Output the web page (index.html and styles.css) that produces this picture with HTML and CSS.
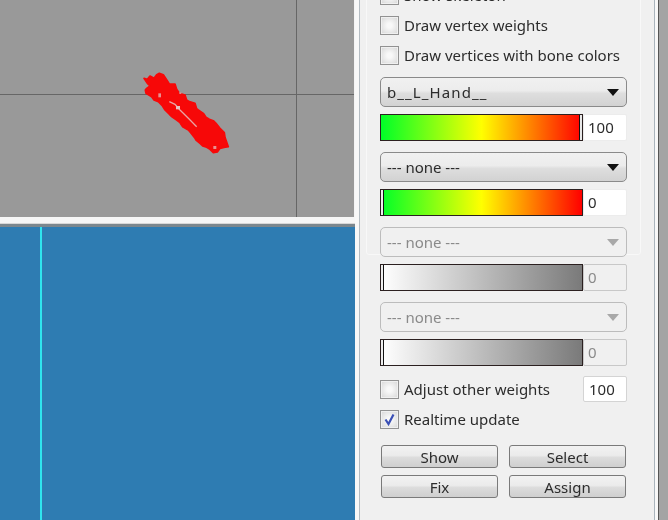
FILE: index.html
```html
<!DOCTYPE html>
<html lang="en">
<head>
<meta charset="utf-8">
<title>Vertex weights</title>
<link rel="stylesheet" href="styles.css">
</head>
<body>
<div class="app">
  <div class="views">
    <div class="view3d">
      <div class="gridline-h"></div>
      <div class="gridline-v"></div>
      <svg class="blob" width="110" height="100" viewBox="0 0 330 300">
        <path d="M42 55 L52 58 L60 48 L72 55 L80 44 L88 40 L100 44 L108 56 L118 72 L135 72 L140 88 L148 100 L165 105 L170 120 L178 125 L195 130 L200 146 L205 150 L220 160 L228 172 L238 178 L250 182 L258 190 L270 205 L283 218 L285 232 L295 260 L282 262 L270 265 L262 276 L250 278 L240 268 L230 262 L218 258 L210 250 L198 240 L195 235 L182 218 L175 210 L158 200 L150 188 L140 180 L128 172 L120 165 L105 150 L96 136 L85 125 L72 120 L65 110 L48 100 L46 90 L50 85 L60 78 L52 70 Z" fill="#f70808" stroke="#f70808" stroke-width="5" stroke-linejoin="round"/>
        <path d="M118 125 L135 133 L150 150 L175 175 L200 200" fill="none" stroke="#e8a4a4" stroke-width="4"/>
        <rect x="85" y="100" width="8" height="12" fill="#e89090"/>
        <rect x="138" y="138" width="12" height="10" fill="#e8c0c0"/>
        <rect x="250" y="258" width="9" height="9" fill="#e89090"/>
        <rect x="148" y="96" width="6" height="6" fill="#d09090"/>
      </svg>
    </div>
    <div class="sash"></div>
    <div class="view2d"><div class="cursor"></div></div>
  </div>
  <div class="gap"></div>
  <aside class="panel">
    <div class="frame"></div>
    <div class="group">
      <label class="check"><span class="box"></span><span>Show skeleton</span></label>
      <label class="check"><span class="box"></span><span>Draw vertex weights</span></label>
      <label class="check"><span class="box"></span><span>Draw vertices with bone colors</span></label>

      <div class="combo active"><span class="wide">b__L_Hand__</span><span class="arrow"></span></div>
      <div class="weight">
        <div class="bar color"><div class="thumb at-end"></div></div>
        <div class="num">100</div>
      </div>

      <div class="combo active"><span>--- none ---</span><span class="arrow"></span></div>
      <div class="weight">
        <div class="bar color"><div class="thumb"></div></div>
        <div class="num">0</div>
      </div>

      <div class="combo off"><span>--- none ---</span><span class="arrow"></span></div>
      <div class="weight">
        <div class="bar gray"><div class="thumb"></div></div>
        <div class="num off">0</div>
      </div>

      <div class="combo off"><span>--- none ---</span><span class="arrow"></span></div>
      <div class="weight">
        <div class="bar gray"><div class="thumb"></div></div>
        <div class="num off">0</div>
      </div>

      <div class="adjust">
        <label class="check"><span class="box"></span><span>Adjust other weights</span></label>
        <div class="num small">100</div>
      </div>
      <label class="check"><span class="box checked">
        <svg width="13" height="13" viewBox="0 0 13 13"><path d="M2.5 6.5 L5.5 11 L10.5 1.5" fill="none" stroke="#3a4fb5" stroke-width="2.2"/></svg>
      </span><span>Realtime update</span></label>

      <div class="buttons">
        <div class="btn">Show</div>
        <div class="btn">Select</div>
        <div class="btn">Fix</div>
        <div class="btn">Assign</div>
      </div>
    </div>
  </aside>
  <div class="rail"></div>
  <div class="edge"></div>
</div>
</body>
</html>
```
FILE: styles.css
```css
* { box-sizing: border-box; }
html, body { margin: 0; padding: 0; }
body {
  width: 668px;
  height: 520px;
  overflow: hidden;
  background: #f0f0f0;
  font-family: "Noto Sans", "Liberation Sans", Arial, sans-serif;
  font-size: 15px;
  color: #2c2c2c;
}
.app { display: flex; width: 668px; height: 520px; filter: blur(0.35px); }
.views { width: 355px; flex: none; display: flex; flex-direction: column; }
.view3d { position: relative; height: 217px; background: #999999; overflow: hidden; border-right: 1px solid #f4f4f4; }
.gridline-h { position: absolute; left: 0; right: 0; top: 94px; height: 1px; background: #666666; }
.gridline-v { position: absolute; top: 0; bottom: 0; left: 296px; width: 1px; background: #666666; }
.blob { position: absolute; left: 130px; top: 60px; }
.sash {
  height: 10px;
  background: linear-gradient(#f6f6f6 0, #f6f6f6 6px, #d8d8d8 6px, #d8d8d8 7px, #7b878e 7px, #7b878e 10px);
}
.view2d { position: relative; flex: 1; background: #2e7cb2; }
.cursor { position: absolute; left: 40px; top: 0; bottom: 0; width: 2px; background: #2fe4ee; }
.gap { width: 4px; flex: none; background: #f8f8f8; }
.panel {
  position: relative;
  width: 296px;
  flex: none;
  background: #f0f0f0;
  border-left: 1px solid #b4bcc2;
  border-right: 1px solid #aab4bc;
}
.frame {
  position: absolute;
  left: 6px;
  right: 13px;
  top: -10px;
  height: 265px;
  border: 1px solid #f8f8f8;
  border-radius: 3px;
}
.group { position: relative; padding-left: 20px; margin-top: -20px; }
.check { display: flex; align-items: center; gap: 5px; height: 30px; white-space: nowrap; }
.box {
  flex: none;
  width: 19px;
  height: 19px;
  border: 1px solid #929292;
  background: radial-gradient(#f8f8f8 20%, #d6d6d6 100%);
  box-shadow: inset 0 0 0 1px #f0f0f0;
  display: flex;
  align-items: center;
  justify-content: center;
}
.combo {
  width: 247px;
  height: 30px;
  margin-top: 7px;
  border: 1px solid #bcbcbc;
  border-radius: 5px;
  background: #f0f0f0;
  color: #8a8a8a;
  display: flex;
  align-items: center;
  justify-content: space-between;
  padding: 0 7px 0 6px;
}
.combo.active {
  border: 1.5px solid #8a8a8a;
  color: #2c2c2c;
  background: linear-gradient(#f1f1f1 0, #ececec 45%, #dedede 55%, #d2d2d2 100%);
}
.wide { letter-spacing: 1.1px; }
.arrow {
  width: 0;
  height: 0;
  border-left: 6px solid transparent;
  border-right: 6px solid transparent;
  border-top: 7px solid #a8a8a8;
}
.active .arrow { border-top-color: #111; }
.weight { display: flex; height: 27px; margin: 7px 0 11px; }
.bar {
  position: relative;
  width: 203px;
  flex: none;
  border: 1.5px solid #2b2020;
}
.color { background: linear-gradient(90deg, #00ff28 0, #ffff00 50%, #ff0000 100%); }
.gray { background: linear-gradient(90deg, #ffffff 0, #7a7a7a 100%); }
.thumb {
  position: absolute;
  left: 0;
  top: 0;
  bottom: 0;
  width: 3px;
  background: #eee;
  border-right: 1.5px solid #111;
}
.thumb.at-end { left: auto; right: 0; width: 3px; background: #e8e8e8; border-right: 0; border-left: 1.5px solid #111; }
.num {
  width: 44px;
  flex: none;
  background: #fff;
  border: 1px solid #ececec;
  border-radius: 2px;
  line-height: 24px;
  padding-left: 4px;
}
.num.off { background: #f0f0f0; border-color: #c8c8c8; color: #8a8a8a; }
.adjust { display: flex; align-items: center; justify-content: space-between; width: 247px; margin-top: -3px; }
.num.small { height: 26px; padding-left: 5px; border-color: #d4d4d4; }
.buttons {
  display: grid;
  grid-template-columns: 117px 117px;
  column-gap: 11px;
  row-gap: 7px;
  margin: 11px 0 0 1px;
}
.btn {
  height: 23px;
  border: 1px solid #7a7a7a;
  border-radius: 3px;
  background: linear-gradient(#f2f2f2 0, #ebebeb 45%, #dcdcdc 55%, #cfcfcf 100%);
  text-align: center;
  line-height: 22px;
}
.rail { width: 3px; flex: none; background: #f8f8f8; }
.edge { flex: 1; background: #a4a4a4; border-left: 1px solid #555; }
```
